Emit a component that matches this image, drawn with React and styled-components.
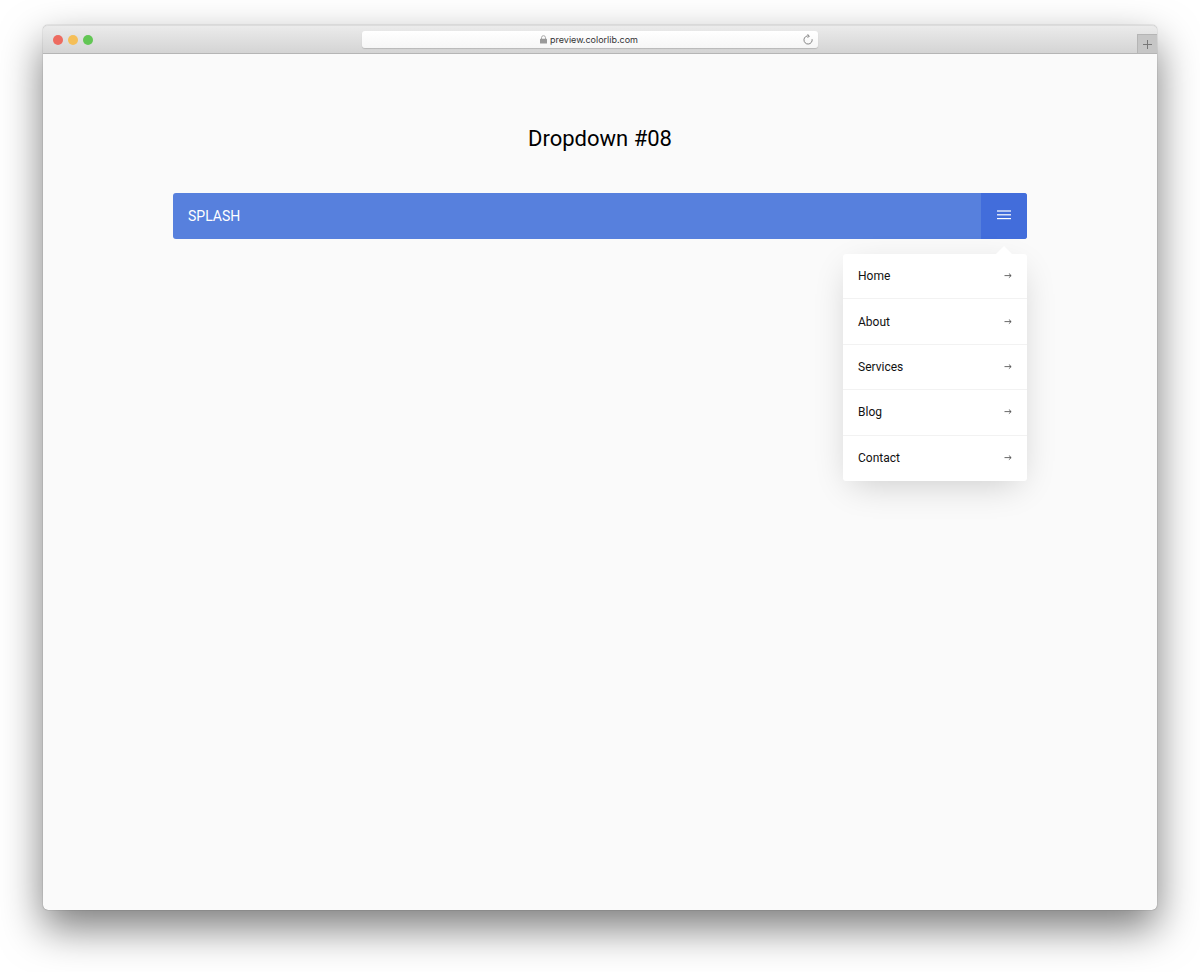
import { useState } from "react";
import styled, { createGlobalStyle } from "styled-components";

const GlobalStyle = createGlobalStyle`
* {
  box-sizing: border-box;
}
body {
  margin: 0;
  background: #ffffff;
  font-family: Roboto, "Liberation Sans", sans-serif;
}
`

const Desktop = styled.div`
display: flex;
min-height: 100vh;
padding: 25px 43px 62px;
overflow: hidden;
`

const BrowserWindow = styled.div`
flex: 1;
display: flex;
flex-direction: column;
background: #fafafa;
border-radius: 5px;
box-shadow: 0 0 1px rgba(0, 0, 0, 0.6), 0 18px 42px rgba(0, 0, 0, 0.52);
`

const Toolbar = styled.header`
display: flex;
align-items: center;
height: 29px;
padding-left: 10px;
background: linear-gradient(#ebebeb, #d4d4d4);
border-top: 1px solid #dcdcdc;
border-bottom: 1px solid #b5b5b5;
border-radius: 5px 5px 0 0;
`

const Lights = styled.div`
flex: 1;
display: flex;
gap: 5px;
margin-right: -10px;
`

const Light = styled.button`
width: 10px;
height: 10px;
padding: 0;
border: 0;
border-radius: 50%;
background: ${(props) => props.$color};
`

const AddressBar = styled.div`
display: flex;
align-items: center;
justify-content: center;
flex: 0 1 456px;
height: 17px;
padding: 0 5px 0 13px;
background: linear-gradient(#ffffff, #f6f6f6);
border-radius: 3px;
box-shadow: 0 1px 1px rgba(0, 0, 0, 0.15);
`

const Address = styled.span`
flex: 1;
display: flex;
align-items: center;
justify-content: center;
gap: 3px;
color: #333333;
font-family: Inter, "Liberation Sans", sans-serif;
font-size: 9px;
line-height: 16px;
`

const IconButton = styled.button`
display: flex;
padding: 0;
border: 0;
background: none;
color: #777777;
`

const Spacer = styled.div`
flex: 1;
`

const NewTab = styled.button`
display: flex;
align-items: center;
justify-content: center;
align-self: flex-end;
width: 20px;
height: 19px;
padding: 0;
border: 0;
border-top: 1px solid #b5b5b5;
border-left: 1px solid #b5b5b5;
background: #c6c6c6;
color: #777777;
`

const Section = styled.main`
width: 100%;
max-width: 854px;
margin: 0 auto;
padding-top: 69px;
`

const Title = styled.h2`
margin: 0 0 38px;
color: #000000;
font-size: 22px;
font-weight: 400;
line-height: 32px;
text-align: center;
`

const Navbar = styled.nav`
position: relative;
display: flex;
align-items: center;
justify-content: space-between;
height: 46px;
padding-left: 15px;
background: #5780dd;
border-radius: 3px;
`

const Brand = styled.a`
color: #ffffff;
font-size: 14px;
line-height: 20px;
text-decoration: none;
`

const MenuButton = styled.button`
display: flex;
align-items: center;
justify-content: center;
width: 46px;
height: 46px;
padding: 0 0 2px;
border: 0;
border-radius: 0 3px 3px 0;
background: #426ddb;
color: #ffffff;
cursor: pointer;
`

const Menu = styled.ul`
position: absolute;
top: 61px;
right: 0;
display: grid;
grid-template-rows: repeat(5, 1fr);
width: 184px;
height: 227px;
margin: 0;
padding: 0;
list-style: none;
background: #ffffff;
border-radius: 3px;
box-shadow: 0 10px 34px -8px rgba(0, 0, 0, 0.2);

&::before {
  content: "";
  position: absolute;
  top: -8px;
  right: 15px;
  border: 8px solid transparent;
  border-top: 0;
  border-bottom-color: #ffffff;
}
`

const MenuItem = styled.li`
display: flex;
&:not(:last-child) {
  border-bottom: 1px solid #f2f2f2;
}
`

const MenuLink = styled.a`
flex: 1;
display: flex;
align-items: center;
justify-content: space-between;
padding: 0 15px;
color: #111111;
font-size: 12px;
line-height: 18px;
text-decoration: none;
`

const links = ["Home", "About", "Services", "Blog", "Contact"]

function LockIcon() {
    return (
        <svg width="7" height="9" viewBox="0 0 7 9" fill="none">
            <path d="M1.5 4V2.7a2 2 0 0 1 4 0V4" stroke="#aaa" />
            <rect y="3.8" width="7" height="4.7" rx="0.6" fill="#999" />
        </svg>
    )
}

function ReloadIcon() {
    return (
        <svg width="10" height="11" viewBox="0 0 10 11" fill="none" stroke="currentColor" strokeWidth="0.9">
            <path d="M5.8 1.9A4.1 4.1 0 1 0 9.1 5.2" />
            <path d="M4.4 0.2L6.4 2L4.6 3.8" />
        </svg>
    )
}

function BarsIcon() {
    return (
        <svg width="14" height="10" viewBox="0 0 14 10" fill="currentColor">
            <rect width="14" height="1.2" y="0.4" />
            <rect width="14" height="1.2" y="4.2" />
            <rect width="14" height="1.2" y="8" />
        </svg>
    )
}

function ArrowIcon() {
    return (
        <svg width="8" height="6" viewBox="0 0 8 6" fill="none" stroke="#444" strokeWidth="0.8">
            <path d="M0.5 2.6H7M4.9 0.5L7.2 2.6L4.9 4.7" />
        </svg>
    )
}

function App() {

    const [open, setOpen] = useState(true)

    const toggle = () => setOpen((prev) => !prev)

    return (
        <Desktop>
            <GlobalStyle />
            <BrowserWindow>
                <Toolbar>
                    <Lights>
                        <Light $color="#ed6b60" aria-label="Close" />
                        <Light $color="#f5bf58" aria-label="Minimize" />
                        <Light $color="#62c654" aria-label="Zoom" />
                    </Lights>
                    <AddressBar>
                        <Address><LockIcon />preview.colorlib.com</Address>
                        <IconButton aria-label="Reload"><ReloadIcon /></IconButton>
                    </AddressBar>
                    <Spacer />
                    <NewTab aria-label="New tab">
                        <svg width="9" height="9" viewBox="0 0 9 9" stroke="currentColor">
                            <path d="M4.5 0V9M0 4.5H9" />
                        </svg>
                    </NewTab>
                </Toolbar>
                <Section>
                    <Title>Dropdown #08</Title>
                    <Navbar>
                        <Brand href="#">SPLASH</Brand>
                        <MenuButton onClick={toggle} aria-expanded={open} aria-label="Menu"><BarsIcon /></MenuButton>
                        {open && (
                            <Menu>
                                {links.map((item) => (
                                    <MenuItem key={item}>
                                        <MenuLink href="#">{item}<ArrowIcon /></MenuLink>
                                    </MenuItem>
                                ))}
                            </Menu>
                        )}
                    </Navbar>
                </Section>
            </BrowserWindow>
        </Desktop>
    )
}

export default App;
